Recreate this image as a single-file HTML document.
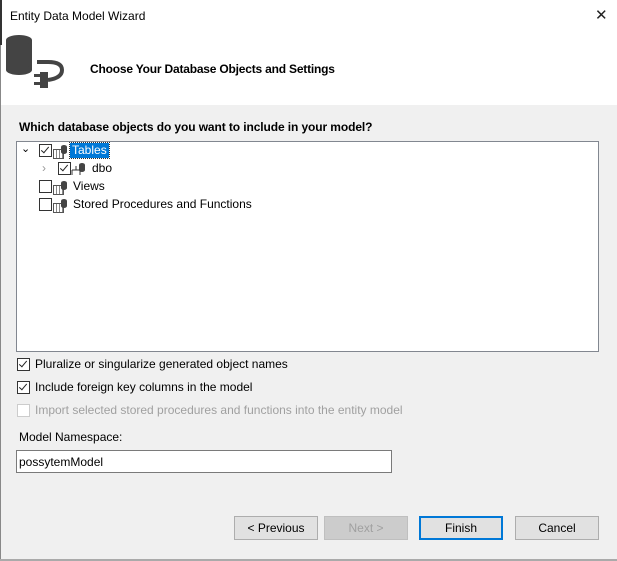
<!DOCTYPE html>
<html><head><style>
body{margin:0;width:617px;height:561px;background:#f0f0f0;font-family:"Liberation Sans",sans-serif;font-size:12px;color:#000;position:relative;overflow:hidden}
.a{position:absolute}
.hdr{left:0;top:0;width:617px;height:105px;background:#fff}
.cb{position:absolute;width:11px;height:11px;border:1px solid #333;background:#fff}
.cb.on::after{content:"";position:absolute;left:3px;top:0px;width:3px;height:7px;border:solid #222;border-width:0 1.5px 1.5px 0;transform:rotate(40deg)}
.btn{position:absolute;top:516px;width:82px;height:22px;border:1px solid #adadad;background:#e1e1e1;text-align:center;line-height:22px}
.ti{position:absolute;width:9px;height:8px;border:1px solid #555;background:repeating-linear-gradient(90deg,#fff 0 2px,#888 2px 3px)}
.cy{position:absolute;width:6px;height:9px;background:#444;border-radius:3px/2px}
</style></head><body>
<div class="a hdr"></div>
<div class="a" style="left:0;top:0;width:1px;height:561px;background:#888"></div>
<div class="a" style="left:0;top:0;width:2px;height:45px;background:#333"></div>
<div class="a" style="left:0;top:559px;width:617px;height:2px;background:#aaa"></div>
<div class="a" style="left:10px;top:9px">Entity Data Model Wizard</div>
<div class="a" style="left:595px;top:6px;font-size:15px;color:#222">✕</div>
<svg class="a" style="left:4px;top:34px" width="62" height="56" viewBox="0 0 62 56">
<rect x="2" y="6" width="26" height="30" fill="#444"/><ellipse cx="15" cy="6" rx="13" ry="5" fill="#444"/><ellipse cx="15" cy="36" rx="13" ry="5" fill="#444"/>
<path d="M44 46 Q58 44 58 36 Q58 28 44 28 L33 28" fill="none" stroke="#444" stroke-width="4"/>
<rect x="36" y="38" width="8" height="16" fill="#444"/><rect x="30" y="40" width="6" height="3" fill="#444"/><rect x="30" y="48" width="6" height="3" fill="#444"/>
</svg>
<div class="a" style="left:90px;top:62px;font-weight:bold;letter-spacing:-0.2px">Choose Your Database Objects and Settings</div>
<div class="a" style="left:19px;top:120px;font-weight:bold;letter-spacing:-0.1px">Which database objects do you want to include in your model?</div>
<div class="a" style="left:16px;top:141px;width:581px;height:209px;background:#fff;border:1px solid #828790"></div>
<div class="a" style="left:21px;top:142px;font-size:11px">⌄</div>
<div class="cb on" style="left:39px;top:144px"></div><div class="ti" style="left:53px;top:149px"></div><div class="cy" style="left:61px;top:145px"></div>
<div class="a" style="left:70px;top:143px;background:#0078d7;color:#fff;padding:0 2px;height:15px;line-height:15px;outline:1px dotted #333">Tables</div>
<div class="a" style="left:42px;top:161px;color:#999">›</div>
<div class="cb on" style="left:58px;top:162px"></div><div class="cy" style="left:79px;top:163px"></div>
<svg class="a" style="left:71px;top:166px" width="10" height="10"><path d="M5 0V4M1 4H9M1 4V9M9 4V9" stroke="#333" fill="none"/></svg>
<div class="a" style="left:92px;top:161px">dbo</div>
<div class="cb" style="left:39px;top:180px"></div><div class="ti" style="left:53px;top:185px"></div><div class="cy" style="left:61px;top:181px"></div>
<div class="a" style="left:73px;top:179px">Views</div>
<div class="cb" style="left:39px;top:198px"></div><div class="ti" style="left:53px;top:203px"></div><div class="cy" style="left:61px;top:199px"></div>
<div class="a" style="left:73px;top:197px">Stored Procedures and Functions</div>
<div class="cb on" style="left:17px;top:358px"></div><div class="a" style="left:35px;top:357px">Pluralize or singularize generated object names</div>
<div class="cb on" style="left:17px;top:381px"></div><div class="a" style="left:35px;top:380px">Include foreign key columns in the model</div>
<div class="cb" style="left:17px;top:404px;border-color:#ccc"></div><div class="a" style="left:35px;top:403px;color:#a0a0a0">Import selected stored procedures and functions into the entity model</div>
<div class="a" style="left:19px;top:430px">Model Namespace:</div>
<div class="a" style="left:16px;top:450px;width:374px;height:21px;background:#fff;border:1px solid #7a7a7a"></div>
<div class="a" style="left:19px;top:455px">possytemModel</div>
<div class="btn" style="left:234px">&lt; Previous</div>
<div class="btn" style="left:324px;color:#a0a0a0;background:#ccc;border-color:#bfbfbf">Next &gt;</div>
<div class="btn" style="left:419px;border:2px solid #0078d7;width:80px;height:20px;line-height:20px">Finish</div>
<div class="btn" style="left:515px">Cancel</div>
</body></html>
